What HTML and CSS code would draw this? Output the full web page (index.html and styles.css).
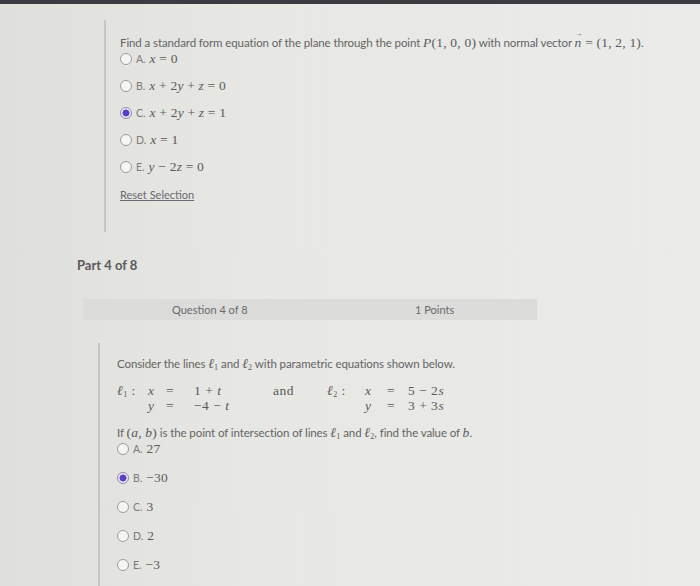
FILE: index.html
```html
<!DOCTYPE html>
<html>
<head>
<meta charset="utf-8">
<link rel="stylesheet" href="styles.css">
</head>
<body>
<div class="topbar"></div>
<div class="page">
  <div class="qblock first">
    <p class="qtext">Find a standard form equation of the plane through the point <span class="m"><i>P</i>(1, 0, 0)</span> with normal vector <span class="m"><span class="vec"><i>n</i></span> = (1, 2, 1)</span>.</p>
    <ul class="opts">
      <li><span class="radio"></span><span class="lbl">A.</span><span class="m"><i>x</i> = 0</span></li>
      <li><span class="radio"></span><span class="lbl">B.</span><span class="m"><i>x</i> + 2<i>y</i> + <i>z</i> = 0</span></li>
      <li><span class="radio on"></span><span class="lbl">C.</span><span class="m"><i>x</i> + 2<i>y</i> + <i>z</i> = 1</span></li>
      <li><span class="radio"></span><span class="lbl">D.</span><span class="m"><i>x</i> = 1</span></li>
      <li><span class="radio"></span><span class="lbl">E.</span><span class="m"><i>y</i> − 2<i>z</i> = 0</span></li>
    </ul>
    <a class="reset" href="#">Reset Selection</a>
  </div>

  <div class="part">Part 4 of 8</div>

  <div class="qbar">
    <span class="qnum">Question 4 of 8</span>
    <span class="pts">1 Points</span>
  </div>

  <div class="qblock second">
    <p class="qtext">Consider the lines <span class="m"><i>ℓ</i><sub>1</sub></span> and <span class="m"><i>ℓ</i><sub>2</sub></span> with parametric equations shown below.</p>
    <div class="eqs m">
      <span><i>ℓ</i><sub>1</sub> :</span><span><i>x</i></span><span>=</span><span>1 + <i>t</i></span><span>and</span><span><i>ℓ</i><sub>2</sub> :</span><span><i>x</i></span><span>=</span><span>5 − 2<i>s</i></span>
      <span></span><span><i>y</i></span><span>=</span><span>−4 − <i>t</i></span><span></span><span></span><span><i>y</i></span><span>=</span><span>3 + 3<i>s</i></span>
    </div>
    <p class="qtext q2">If <span class="m">(<i>a</i>, <i>b</i>)</span> is the point of intersection of lines <span class="m"><i>ℓ</i><sub>1</sub></span> and <span class="m"><i>ℓ</i><sub>2</sub></span>, find the value of <span class="m"><i>b</i></span>.</p>
    <ul class="opts wide">
      <li><span class="radio"></span><span class="lbl">A.</span><span class="m">27</span></li>
      <li><span class="radio on"></span><span class="lbl">B.</span><span class="m">−30</span></li>
      <li><span class="radio"></span><span class="lbl">C.</span><span class="m">3</span></li>
      <li><span class="radio"></span><span class="lbl">D.</span><span class="m">2</span></li>
      <li><span class="radio"></span><span class="lbl">E.</span><span class="m">−3</span></li>
    </ul>
  </div>
</div>
</body>
</html>
```

FILE: styles.css
```css
html, body {
  margin: 0;
  padding: 0;
}
body {
  width: 700px;
  height: 586px;
  overflow: hidden;
  background: linear-gradient(to right, #dfdfdc 0px, #e7e7e4 250px, #ebebe9 700px);
  font-family: Lato, "Open Sans", "Liberation Sans", sans-serif;
  color: #646464;
}
.topbar {
  height: 4px;
  background: #3b3b42;
}
.page {
  padding-left: 77px;
  padding-top: 16px;
}
.qblock {
  border-left: 2px solid #c6c6c4;
}
.qblock.first {
  margin-left: 27px;
  padding: 15px 0 29px 14px;
}
.qblock.second {
  margin-left: 21px;
  padding: 13px 0 20px 17px;
}
.qtext {
  margin: 0;
  font-size: 11.5px;
  line-height: 16px;
  height: 16px;
  white-space: nowrap;
  letter-spacing: -0.1px;
}
.m {
  font-family: "Liberation Serif", "DejaVu Serif", serif;
  font-size: 13.5px;
  color: #5a5a5a;
  letter-spacing: 0.2px;
}
.m i {
  font-style: italic;
}
.m sub {
  font-size: 8px;
  vertical-align: -2px;
  line-height: 0;
}
.vec {
  position: relative;
  display: inline-block;
}
.vec::before {
  content: "→";
  position: absolute;
  left: 0;
  top: -9px;
  font-size: 8px;
  font-style: normal;
}
.opts {
  list-style: none;
  margin: 0;
  padding: 0;
}
.opts li {
  display: flex;
  align-items: center;
  height: 16px;
  margin-top: 11px;
  font-size: 10.5px;
  white-space: nowrap;
}
.opts li:first-child {
  margin-top: 0;
}
.opts.wide li {
  margin-top: 13px;
}
.opts.wide li:first-child {
  margin-top: 0;
}
.radio {
  width: 10px;
  height: 10px;
  border-radius: 50%;
  border: 1px solid #9c9c9c;
  background: #f5f5f3;
  margin-right: 4px;
  flex: none;
}
.radio.on {
  border-color: #8f88b6;
  background: radial-gradient(circle, #5a3fc4 0 3.2px, #ebe8f6 3.8px);
}
.lbl {
  color: #7a7a7a;
  margin-right: 4px;
}
.reset {
  display: block;
  margin-top: 12px;
  height: 16px;
  line-height: 16px;
  font-size: 11px;
  color: #6a6a72;
  text-decoration: underline;
  width: max-content;
}
.part {
  margin-top: 24px;
  height: 18px;
  line-height: 18px;
  font-size: 13px;
  font-weight: 700;
  color: #5a5a5a;
}
.qbar {
  margin-top: 25px;
  margin-left: 6px;
  width: 365px;
  padding-left: 89px;
  height: 21px;
  display: flex;
  align-items: center;
  background: #dcdcda;
  font-size: 11px;
  color: #6a6a6a;
}
.qnum {
  flex: 0 0 243px;
}
.second {
  margin-top: 23px;
}
.eqs {
  margin-top: 11px;
  display: grid;
  grid-template-columns: 31px 18px 28px 79px 54px 38px 22px 21px auto;
  grid-auto-rows: 15px;
  line-height: 15px;
  white-space: nowrap;
  letter-spacing: 0.5px;
}
.q2 {
  margin-top: 12px;
}
```
